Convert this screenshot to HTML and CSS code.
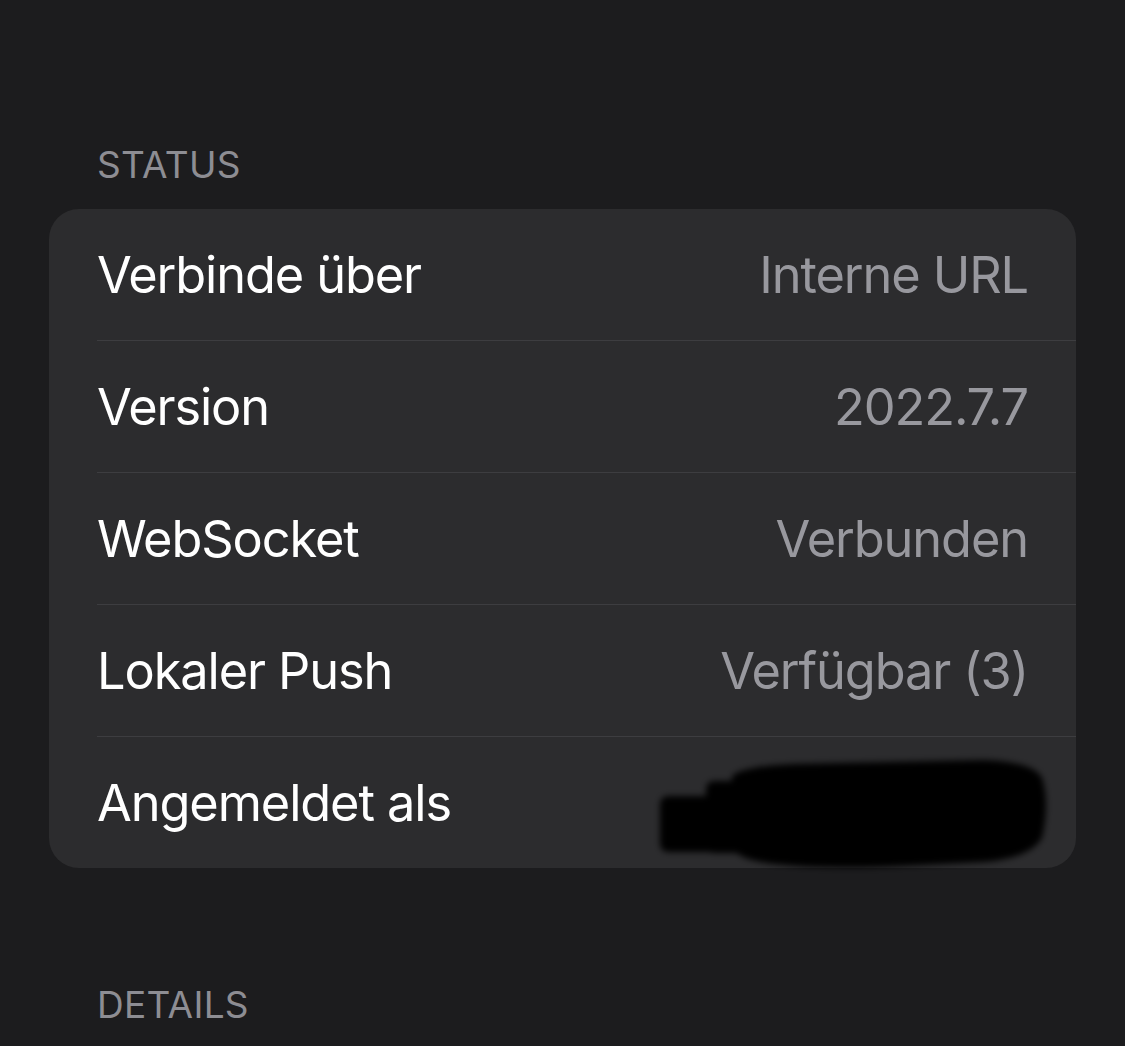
FILE: index.html
```html
<!DOCTYPE html>
<html lang="de">
<head>
<meta charset="utf-8">
<title>Status</title>
<link rel="stylesheet" href="styles.css">
</head>
<body>
<main class="page">
  <h2 class="section-title">STATUS</h2>
  <section class="card">
    <div class="row"><div class="row-inner"><span class="label">Verbinde über</span><span class="value">Interne URL</span></div></div>
    <div class="row"><div class="row-inner"><span class="label">Version</span><span class="value">2022.7.7</span></div></div>
    <div class="row"><div class="row-inner"><span class="label">WebSocket</span><span class="value">Verbunden</span></div></div>
    <div class="row"><div class="row-inner"><span class="label">Lokaler Push</span><span class="value">Verfügbar (3)</span></div></div>
    <div class="row last"><div class="row-inner"><span class="label">Angemeldet als</span>
      <svg class="redact" width="400" height="115" viewBox="0 0 400 115" aria-hidden="true">
        <defs><filter id="b" x="-10%" y="-20%" width="120%" height="140%"><feGaussianBlur stdDeviation="3"/></filter></defs>
        <g fill="#000" filter="url(#b)">
          <rect x="6" y="38" width="90" height="56" rx="8"/>
          <rect x="52" y="23" width="60" height="72" rx="8"/>
          <path d="M78 18 Q90 8 140 6 L330 2 Q380 4 388 20 Q396 45 388 80 Q376 100 330 104 L250 108 Q170 112 120 106 Q85 102 78 90 Z"/>
        </g>
      </svg>
    </div></div>
  </section>
  <h2 class="section-title details">DETAILS</h2>
</main>
</body>
</html>
```
FILE: styles.css
```css
html, body {
  margin: 0;
  padding: 0;
  background: #1c1c1e;
}
body {
  font-family: Inter, "Noto Sans", sans-serif;
  color: #ffffff;
  overflow: hidden;
  height: 1046px;
}
.page {
  padding: 143px 49px 0 49px;
}
.section-title {
  margin: 0 0 0 48px;
  font-size: 37px;
  line-height: 44px;
  font-weight: 400;
  color: #8d8d93;
  letter-spacing: 0.3px;
}
.section-title.details {
  margin-top: 115px;
}
.card {
  margin-top: 22px;
  background: #2c2c2e;
  border-radius: 30px;
  display: flex;
  flex-direction: column;
}
.row {
  padding-left: 48px;
}
.row-inner {
  height: 131px;
  border-bottom: 1px solid #3d3d40;
  display: flex;
  align-items: center;
  justify-content: space-between;
  padding-right: 48px;
}
.row.last .row-inner {
  border-bottom: none;
}
.label {
  font-size: 50.5px;
  letter-spacing: -1.1px;
  color: #ffffff;
}
.value {
  font-size: 50.5px;
  letter-spacing: -1.1px;
  color: #98989e;
}
.redact {
  margin-right: -26px;
  margin-top: 26px;
  overflow: visible;
}
```
